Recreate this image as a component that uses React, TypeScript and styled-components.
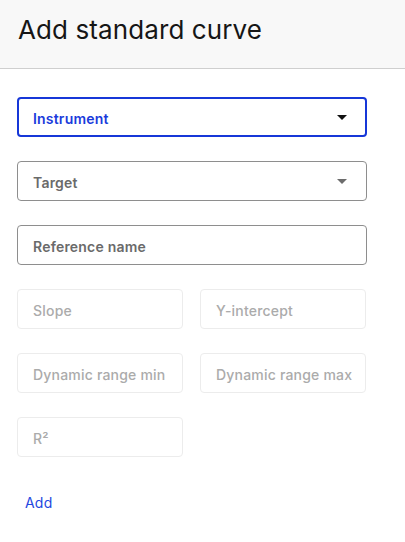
import React from "react";
import styled, { createGlobalStyle } from "styled-components";

const GlobalStyle = createGlobalStyle`
  html, body {
    margin: 0;
    padding: 0;
    background: #ffffff;
    font-family: "Inter", "Noto Sans", sans-serif;
  }
`;

const Page = styled.div`
  width: 405px;
  min-height: 542px;
  background: #fff;
`;

const Header = styled.header`
  height: 69px;
  background: #f8f8f8;
  border-bottom: 1px solid #cfcfcf;
  display: flex;
  align-items: center;
  padding: 0 18px 10px;
  box-sizing: border-box;
`;

const Title = styled.h1`
  margin: 0;
  font-size: 26px;
  font-weight: 400;
  color: #161616;
  letter-spacing: 0.1px;
`;

const Form = styled.div`
  padding: 28px 38px 0 17px;
  display: flex;
  flex-direction: column;
  gap: 24px;
`;

const Row = styled.div`
  display: grid;
  grid-template-columns: 166px 166px;
  gap: 17px;
`;

type FieldKind = "focused" | "normal" | "disabled";

const Field = styled.div<{ $kind: FieldKind }>`
  height: 40px;
  box-sizing: border-box;
  display: flex;
  align-items: center;
  justify-content: space-between;
  padding: 2px ${(p) => (p.$kind === "focused" ? 18 : 19)}px 0 ${(p) => (p.$kind === "focused" ? 14 : 15)}px;
  border-radius: 4px;
  border: ${(p) =>
    p.$kind === "focused"
      ? "2px solid #1637d8"
      : p.$kind === "normal"
      ? "1px solid #8e8e8e"
      : "1px solid #ececec"};
  font-size: 14px;
  letter-spacing: 0.2px;
  font-weight: ${(p) => (p.$kind === "disabled" ? 500 : 600)};
  color: ${(p) =>
    p.$kind === "focused" ? "#1a3bdc" : p.$kind === "normal" ? "#6a6a6a" : "#ababab"};
  white-space: nowrap;
`;

const Caret = styled.span<{ $dark?: boolean }>`
  width: 0;
  height: 0;
  margin-top: -2px;
  border-left: 5px solid transparent;
  border-right: 5px solid transparent;
  border-top: 5px solid ${(p) => (p.$dark ? "#111" : "#6c6c6c")};
`;

const AddLink = styled.a`
  margin: 37px 0 0 25px;
  display: inline-block;
  font-size: 14px;
  letter-spacing: 0.2px;
  color: #2447e0;
  text-decoration: none;
  cursor: pointer;
`;

export default function App() {
  return (
    <Page>
      <GlobalStyle />
      <Header>
        <Title>Add standard curve</Title>
      </Header>
      <Form>
        <Field $kind="focused">
          Instrument
          <Caret $dark />
        </Field>
        <Field $kind="normal">
          Target
          <Caret />
        </Field>
        <Field $kind="normal">Reference name</Field>
        <Row>
          <Field $kind="disabled">Slope</Field>
          <Field $kind="disabled">Y-intercept</Field>
        </Row>
        <Row>
          <Field $kind="disabled">Dynamic range min</Field>
          <Field $kind="disabled">Dynamic range max</Field>
        </Row>
        <Row>
          <Field $kind="disabled">R²</Field>
        </Row>
      </Form>
      <AddLink>Add</AddLink>
    </Page>
  );
}
